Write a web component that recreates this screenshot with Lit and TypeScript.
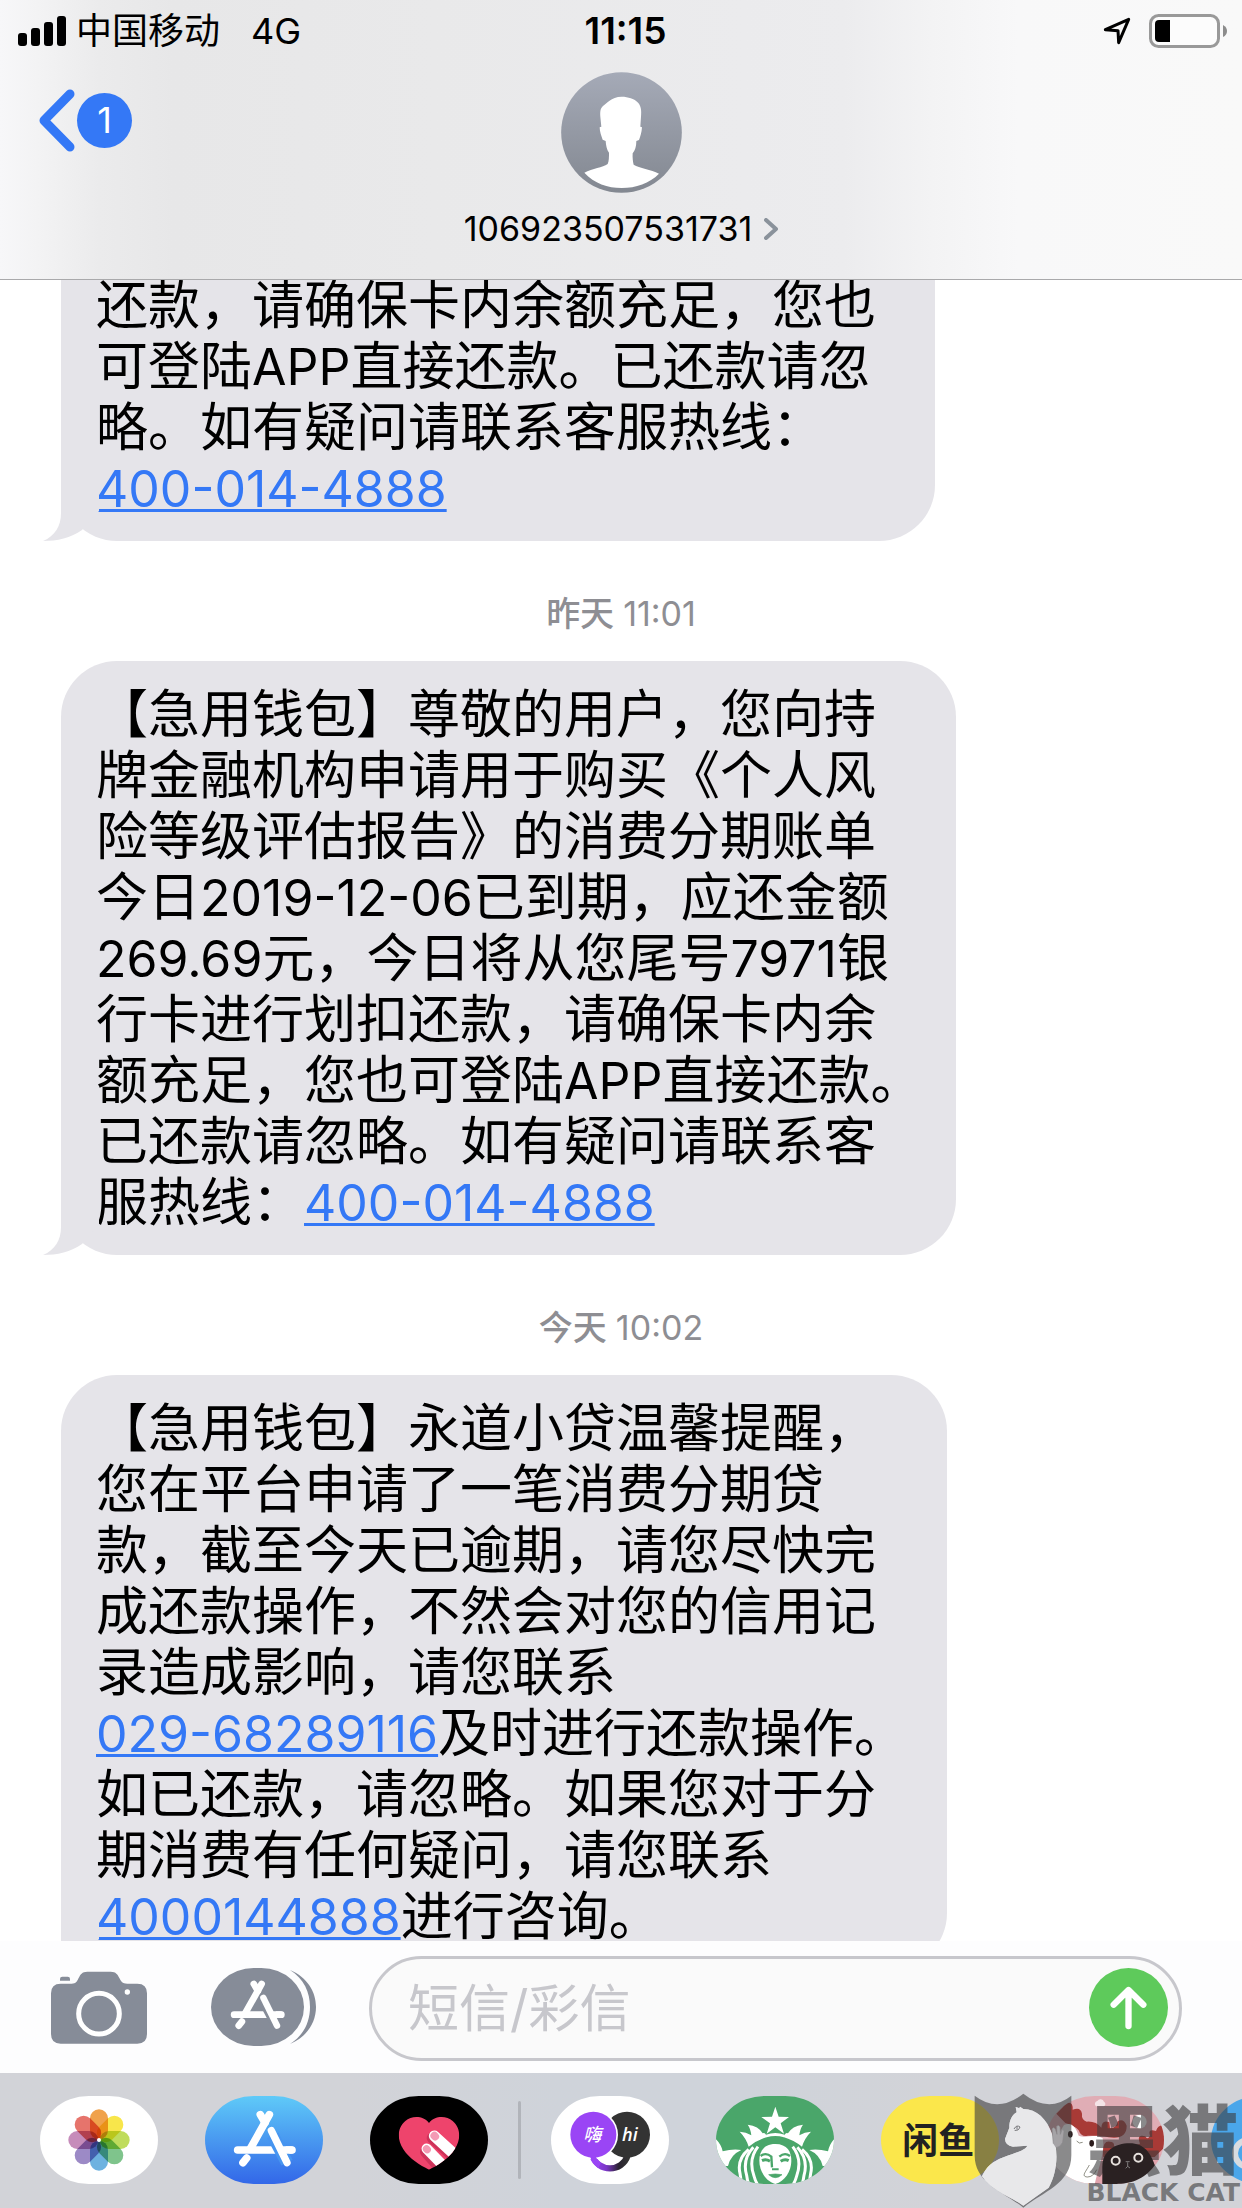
import { LitElement, html, svg, css, nothing, TemplateResult } from "lit";
import { customElement, property } from "lit/decorators.js";

type Part = string | { latin: string } | { link: string };
type Line = Part[];

interface Message {
  time?: string[];
  size: string;
  lines: Line[];
}

const l = (latin: string) => ({ latin });
const tel = (link: string) => ({ link });

const messages: Message[] = [
  {
    size: "narrow cut",
    lines: [
      ["还款，请确保卡内余额充足，您也"],
      ["可登陆", l("APP"), "直接还款。已还款请忽"],
      ["略。如有疑问请联系客服热线："],
      [tel("400-014-4888")],
    ],
  },
  {
    time: ["昨天", "11:01"],
    size: "wide",
    lines: [
      ["【急用钱包】尊敬的用户，您向持"],
      ["牌金融机构申请用于购买《个人风"],
      ["险等级评估报告》的消费分期账单"],
      ["今日", l("2019-12-06"), "已到期，应还金额"],
      [l("269.69"), "元，今日将从您尾号", l("7971"), "银"],
      ["行卡进行划扣还款，请确保卡内余"],
      ["额充足，您也可登陆", l("APP"), "直接还款。"],
      ["已还款请忽略。如有疑问请联系客"],
      ["服热线：", tel("400-014-4888")],
    ],
  },
  {
    time: ["今天", "10:02"],
    size: "medium",
    lines: [
      ["【急用钱包】永道小贷温馨提醒，"],
      ["您在平台申请了一笔消费分期贷"],
      ["款，截至今天已逾期，请您尽快完"],
      ["成还款操作，不然会对您的信用记"],
      ["录造成影响，请您联系"],
      [tel("029-68289116"), "及时进行还款操作。"],
      ["如已还款，请忽略。如果您对于分"],
      ["期消费有任何疑问，请您联系"],
      [tel("4000144888"), "进行咨询。"],
    ],
  },
];

const base = css`
  :host {
    font-family: Inter, "Noto Sans CJK SC", sans-serif;
    text-spacing-trim: space-all;
    text-autospace: no-autospace;
  }
  * {
    box-sizing: border-box;
  }
  svg {
    display: block;
    flex: none;
  }
  button {
    margin: 0;
    padding: 0;
    border: 0;
    background: none;
    color: inherit;
    font: inherit;
  }
`;

/* ---------- header ---------- */

@customElement("chat-header")
export class ChatHeader extends LitElement {
  static styles = [
    base,
    css`
      :host {
        display: block;
        color: #000;
        border-bottom: 1px solid #a9a9ab;
        background: linear-gradient(
          90deg,
          #f7f7f9 0%,
          #f3f3f4 3%,
          #ebebec 8%,
          #e7e7e8 14%,
          #e9e9ea 35%,
          #ebebed 60%,
          #ececee 68%,
          #f3f3f4 75%,
          #f8f8f9 82%,
          #f9f9f9 100%
        );
      }
      .status {
        display: grid;
        grid-template-columns: 1fr auto 1fr;
        align-items: center;
        height: 62px;
        padding: 0 15px 0 18px;
        font-size: 36px;
        line-height: 40px;
      }
      .left {
        display: flex;
        align-items: center;
        gap: 10px;
      }
      .net {
        margin-left: 21px;
      }
      .right {
        display: flex;
        align-items: center;
        justify-content: flex-end;
        gap: 18px;
      }
      .time {
        padding-left: 6px;
        font-size: 37px;
        font-weight: 600;
      }
      .nav {
        display: grid;
        grid-template-columns: 1fr auto 1fr;
        align-items: start;
        padding: 10px 38px 30px;
      }
      .back {
        display: flex;
        align-items: center;
        gap: 2px;
        margin-top: 17px;
      }
      .count {
        width: 55px;
        height: 55px;
        border-radius: 50%;
        background: #3478f6;
        color: #fff;
        font-size: 36px;
        line-height: 55px;
        text-align: center;
      }
      .contact {
        display: flex;
        flex-direction: column;
        align-items: center;
        gap: 16px;
      }
      .number {
        display: flex;
        align-items: center;
        gap: 12px;
        font-size: 34px;
        line-height: 40px;
      }
    `,
  ];

  render() {
    return html`
      <div class="status">
        <div class="left">
          <svg width="48" height="30" viewBox="0 0 48 30" aria-hidden="true">
            <rect x="0" y="17" width="9" height="13" rx="3" />
            <rect x="13" y="12" width="9" height="18" rx="3" />
            <rect x="26" y="6" width="9" height="24" rx="3" />
            <rect x="39" y="0" width="9" height="30" rx="3" />
          </svg>
          <span>中国移动</span><span class="net">4G</span>
        </div>
        <span class="time">11:15</span>
        <div class="right">
          <svg width="28" height="28" viewBox="0 0 84 84" aria-hidden="true">
            <path
              d="M7 38 L77 7 L47 77 L45 41 Z"
              fill="none"
              stroke="#000"
              stroke-width="9"
              stroke-linejoin="round"
            />
          </svg>
          <svg width="78" height="34" viewBox="0 0 78 34" aria-hidden="true">
            <rect x="1.5" y="1.5" width="68" height="31" rx="8" fill="#fcfcfc" stroke="#999" stroke-width="3" />
            <path d="M21 6 V28 H10 Q6 28 6 24 V10 Q6 6 10 6Z" />
            <path d="M74 11 Q78 13 78 17 Q78 21 74 23Z" fill="#8c8c8c" />
          </svg>
        </div>
      </div>
      <nav class="nav">
        <button class="back" aria-label="返回">
          <svg width="37" height="63" viewBox="0 0 37 63">
            <path
              d="M32 5 L6 31.500 L32 58"
              fill="none"
              stroke="#3478f6"
              stroke-width="9"
              stroke-linecap="round"
              stroke-linejoin="round"
            />
          </svg>
          <span class="count">1</span>
        </button>
        <button class="contact">
          <svg width="121" height="121" viewBox="420 216 363 363" aria-hidden="true">
            <defs>
              <linearGradient id="av" x1="0" y1="0" x2="0" y2="1">
                <stop offset="0" stop-color="#a5aab7" />
                <stop offset="1" stop-color="#838891" />
              </linearGradient>
            </defs>
            <circle cx="601.500" cy="397.500" r="181" fill="url(#av)" />
            <path
              fill="#fff"
              d="M602 290 C622 290 640 297 648 305 C660 315 662 330 660 350 L658 380 L663 382 C662 398 658 410 654 420 L646 423 C646 440 642 452 635 460 C634 475 636 486 638 494 C655 504 690 508 714 521 C685 550 645 564 602 564 C560 564 520 550 490 518 C515 506 545 502 560 492 C564 484 564 470 564 458 C557 450 555 435 554 423 L545 419 C541 408 536 395 536 382 L541 380 L538 350 C537 335 538 325 546 318 C556 312 570 290 602 290Z"
            />
          </svg>
          <span class="number">
            106923507531731
            <svg width="14" height="22" viewBox="0 0 14 22">
              <path
                d="M2 2 L12 11 L2 20"
                fill="none"
                stroke="#8a929b"
                stroke-width="4"
                stroke-linecap="round"
                stroke-linejoin="round"
              />
            </svg>
          </span>
        </button>
      </nav>
    `;
  }
}

/* ---------- bubble ---------- */

@customElement("chat-message")
export class ChatMessage extends LitElement {
  @property({ attribute: false }) message!: Message;

  static styles = [
    base,
    css`
      :host {
        display: block;
      }
      .stamp {
        display: flex;
        justify-content: center;
        gap: 9px;
        padding: 53px 0 27px;
        color: #8e8e93;
        font-size: 34px;
        line-height: 40px;
      }
      .day {
        font-weight: 500;
      }
      .bubble {
        position: relative;
        width: fit-content;
        padding: 23px 30px 22px 35px;
        border-radius: 56px;
        background: #e5e4e9;
        color: #000;
        font-size: 52px;
        line-height: 61px;
      }
      .narrow {
        min-width: 874px;
      }
      .medium {
        min-width: 886px;
      }
      .wide {
        min-width: 895px;
      }
      .cut {
        padding-top: 0;
        border-top-left-radius: 0;
        border-top-right-radius: 0;
      }
      .line {
        height: 61px;
        margin: 0;
        white-space: nowrap;
      }
      .latin,
      .tel {
        font-size: 50px;
      }
      .tel {
        color: #3478f6;
        text-decoration: underline;
        text-decoration-thickness: 3px;
        text-underline-offset: 2px;
        text-decoration-skip-ink: none;
      }
      .tail {
        position: absolute;
        left: -18px;
        bottom: 0;
      }
    `,
  ];

  private part(p: Part) {
    if (typeof p === "string") return p;
    if ("latin" in p) return html`<span class="latin">${p.latin}</span>`;
    return html`<a class="tel" href="tel:${p.link}">${p.link}</a>`;
  }

  render() {
    const m = this.message;
    return html`
      ${m.time
        ? html`<div class="stamp"><span class="day">${m.time[0]}</span><span>${m.time[1]}</span></div>`
        : nothing}
      <div class="bubble ${m.size}">
        <svg class="tail" width="60" height="60" viewBox="0 0 60 60" aria-hidden="true">
          <path fill="#e5e4e9" d="M18 0 V32 C18 45 12 55 0 60 C14 60 28 57 39 49 L56 30 V0Z" />
        </svg>
        ${m.lines.map((line) => html`<p class="line">${line.map((p) => this.part(p))}</p>`)}
      </div>
    `;
  }
}

/* ---------- composer ---------- */

/* The three sticks of the App Store letter, cut apart by strokes of the ground behind it. */
const storeSticks = (ground: string) => svg`
  <g fill="none" stroke-linecap="round" stroke-width="23">
    <path d="M98 162 H258" stroke="#fff" />
    <path d="M193 56 L136 158" stroke="#fff" />
    <path d="M166 56 L180 80" stroke="#fff" />
    <path d="M203 118 L246 200" stroke=${ground} stroke-width="38" stroke-linecap="butt" />
    <path d="M236 162 H261" stroke="#fff" />
    <path d="M125 186 L114 200" stroke="#fff" />
    <path d="M199 104 L246 200" stroke="#fff" stroke-width="22" />
  </g>`;

@customElement("chat-composer")
export class ChatComposer extends LitElement {
  static styles = [
    base,
    css`
      :host {
        display: block;
        background: #fdfdfe;
      }
      .bar {
        display: flex;
        align-items: center;
        padding: 15px 60px 12px 51px;
      }
      .store {
        margin: 0 53px 0 64px;
      }
      .tool {
        padding-bottom: 3px;
      }
      .field {
        display: flex;
        align-items: center;
        flex: 1;
        min-width: 0;
        height: 105px;
        padding: 0 11px 0 36px;
        border: 3px solid #c7c7cc;
        border-radius: 53px;
        background: #fafafa;
      }
      .text {
        flex: 1;
        min-width: 0;
        padding: 0;
        border: 0;
        outline: 0;
        background: none;
        font-family: inherit;
        font-size: 51px;
        line-height: 61px;
      }
      .text::placeholder {
        color: #c7c7cc;
        opacity: 1;
      }
    `,
  ];

  render() {
    return html`
      <form class="bar">
        <button class="tool" type="button" aria-label="相机">
          <svg width="96" height="73" viewBox="153 212 288 217">
            <g fill="#868c98">
              <path
                d="M182 249 H215 C242 249 230 213 262 213 H332 C364 213 352 249 382 249 H412 Q441 249 441 278 V400 Q441 429 412 429 H182 Q153 429 153 400 V278 Q153 249 182 249Z"
              />
              <path d="M180 240 V235 Q180 228 187 228 H203 Q210 228 210 235 V240Z" />
            </g>
            <circle cx="297" cy="339" r="61" fill="none" stroke="#fff" stroke-width="15" />
            <circle cx="382" cy="274" r="8" fill="#fff" />
          </svg>
        </button>
        <button class="tool store" type="button" aria-label="应用">
          <svg width="105" height="78" viewBox="633 204 315 234">
            <rect x="633" y="204" width="279" height="234" rx="128" ry="117" fill="#868c98" />
            <path
              fill="#868c98"
              d="M870 210 C922 232 948 275 948 321 C948 367 922 410 870 432 C912 405 930 365 930 321 C930 277 912 237 870 210Z"
            />
            <g transform="translate(617 203) scale(0.870)">${storeSticks("#868c98")}</g>
          </svg>
        </button>
        <div class="field">
          <input class="text" type="text" placeholder="短信/彩信" aria-label="短信/彩信" />
          <button class="tool" type="button" aria-label="发送">
            <svg width="79" height="79" viewBox="0 0 237 237">
              <circle cx="118.500" cy="118.500" r="118.500" fill="#5eca5b" />
              <path
                d="M118.500 174 V72 M74 110 L118.500 66 L163 110"
                fill="none"
                stroke="#fff"
                stroke-width="19"
                stroke-linecap="round"
                stroke-linejoin="round"
              />
            </svg>
          </button>
        </div>
      </form>
    `;
  }
}

/* ---------- app strip ---------- */

const petals = ["#f0a24c", "#f8e64b", "#bfdc5c", "#7fc48c", "#6db2e0", "#9c8ac6", "#c68cba", "#e6746c"];

const pill = (label: string, ground: string, body: TemplateResult | unknown) => html`
  <button class="app" aria-label=${label}>
    <svg width="118" height="88" viewBox="0 0 354 264">
      <defs>
        <clipPath id="pill"><rect width="354" height="264" rx="146" ry="132" /></clipPath>
        <linearGradient id="store" x1="0" y1="0" x2="0" y2="1">
          <stop offset="0" stop-color="#5fcaf8" />
          <stop offset="1" stop-color="#3367e8" />
        </linearGradient>
        <linearGradient id="smile" x1="0" x2="1">
          <stop offset="0" stop-color="#9a45f5" />
          <stop offset="0.400" stop-color="#7a36c6" />
          <stop offset="0.750" stop-color="#2a2430" />
          <stop offset="1" stop-color="#333" />
        </linearGradient>
        <clipPath id="heart"
          ><path
            d="M177 81 C160 58 125 58 106 75 C82 95 80 130 100 160 C118 188 150 208 177 221 C204 208 236 188 254 160 C274 130 272 95 248 75 C229 58 194 58 177 81Z"
        /></clipPath>
      </defs>
      <g clip-path="url(#pill)">
        <rect width="354" height="264" fill=${ground} />
        ${body}
      </g>
    </svg>
  </button>
`;

const photos = svg`
  <g transform="translate(177 132)">
    ${petals.map(
      (c, i) =>
        svg`<rect class="petal" x="-27" y="-92" width="54" height="90" rx="27" fill=${c} transform="rotate(${i * 45})" />`
    )}
    <circle r="6" fill="#fff" />
  </g>`;

const heart = svg`
  <g clip-path="url(#heart)">
    <rect x="70" y="50" width="220" height="190" fill="#ee446c" />
    <g stroke-linecap="round" fill="none">
      <path d="M186 126 L270 200 M166 168 L230 240" stroke="#b8284c" stroke-width="32" opacity=".6" />
      <path d="M193 120 L276 196" stroke="#fff" stroke-width="33" />
      <path d="M170 158 L236 226" stroke="#fff" stroke-width="31" />
    </g>
    <rect x="182" y="107" width="24" height="27" rx="12" fill="#f49ab4" transform="rotate(-45 194 120)" />
    <rect x="160" y="147" width="22" height="25" rx="11" fill="#f49ab4" transform="rotate(-45 171 160)" />
  </g>`;

const greeting = svg`
  <path d="M124 178 C140 230 214 230 230 178" fill="none" stroke="url(#smile)" stroke-width="19" />
  <circle cx="228" cy="116" r="69" fill="#333" />
  <circle cx="127" cy="116" r="74" fill="#fff" />
  <path d="M116 178 C122 198 130 208 142 216 L150 200 C140 194 136 186 132 178Z" fill="#9a45f5" />
  <circle cx="127" cy="116" r="69" fill="#9a45f5" />
  <text class="hai" x="97" y="136">嗨</text>
  <text class="hi" x="213" y="136">hi</text>`;

const siren = svg`
  <g fill="#fff">
    <path d="M178 32 L188 62 L219 63 L194 82 L204 113 L178 94 L152 113 L162 82 L136 63 L168 62Z" />
    <path d="M71 107 Q90 108 106 118 Q104 98 95 86 Q128 90 140 112 Q146 108 150 116 L156 122 Q122 132 98 152 Q90 126 71 107Z" />
    <path d="M285 107 Q266 108 250 118 Q252 98 261 86 Q228 90 216 112 Q210 108 206 116 L200 122 Q234 132 258 152 Q266 126 285 107Z" />
    <path d="M150 116 Q178 106 206 116 L204 124 Q178 116 152 124Z" />
    <path d="M0 130 Q16 146 20 166 Q50 158 76 162 Q44 176 36 210 H0Z" />
    <path d="M354 130 Q340 146 336 166 Q306 158 280 162 Q312 176 320 210 H354Z" />
    <path d="M178 144 C142 144 130 168 130 194 C130 226 150 256 178 264 C206 256 226 226 226 194 C226 168 214 144 178 144Z" />
  </g>
  <g fill="none" stroke="#fff" stroke-width="9">
    <path d="M98 160 Q62 190 72 232 Q74 252 80 268" />
    <path d="M112 154 Q78 190 92 238 Q94 256 100 268" />
    <path d="M126 152 Q96 190 114 240 Q118 256 126 268" />
    <path d="M258 160 Q294 190 284 232 Q282 252 276 268" />
    <path d="M244 154 Q278 190 264 238 Q262 256 256 268" />
    <path d="M230 152 Q260 190 242 240 Q238 256 230 268" />
  </g>
  <g fill="none" stroke="#4aa66a" stroke-width="7">
    <path d="M134 180 Q150 168 166 182 L168 214 M222 180 Q206 168 190 182" />
    <path d="M138 194 Q150 188 162 196 M218 194 Q206 188 194 196" stroke-width="9" />
    <path d="M168 220 H188" stroke-width="6" />
    <path d="M158 236 Q178 232 198 236 Q178 254 158 236Z" fill="#4aa66a" stroke-width="2" />
  </g>`;

const pets = svg`
  <g transform="translate(-614 -587)">
    <path fill="#df9da6" d="M614 760 H970 V860 H614Z" opacity=".6" />
    <path fill="#f4e4e7" d="M764 618 a9 9 0 0 1 4 -16 a11 11 0 0 1 20 2 a8 8 0 0 1 0 14Z" />
    <path fill="#a83a36" d="M645 640 Q664 622 676 608 Q696 602 694 628 Q718 618 722 640 Q720 658 736 664 Q764 662 780 682 Q782 656 804 666 L806 684 Q828 682 828 664 Q846 652 856 676 Q856 712 818 712 Q784 708 770 706 L740 706 Q720 712 712 690 Q700 676 672 668Z" />
    <path fill="#a83a36" d="M786 770 Q780 720 806 724 Q820 724 818 738 L850 744 L896 730 Q884 700 912 708 Q918 720 926 706 Q918 684 944 692 Q950 674 966 676 L970 740 L940 770Z" />
    <path fill="#fff" d="M614 775 C640 735 650 700 668 674 C690 664 704 680 712 706 C740 716 760 698 784 714 C792 760 768 810 758 862 H690 C650 850 620 820 614 775Z" />
    <circle cx="895" cy="664" r="21" fill="#fff" />
    <ellipse cx="687" cy="702" rx="7" ry="10" fill="#2b1b1b" />
    <ellipse cx="751" cy="729" rx="7" ry="10" fill="#2b1b1b" />
    <path d="M706 722 q7 10 18 4 M744 794 c-10 20 -26 34 -6 36 q18 0 28 -22" fill="none" stroke="#554" stroke-width="2" />
  </g>`;

/* The black cat sits in front of the lettering, so it is drawn in its own layer. */
const blackCat = svg`
  <path fill="#2a2122" d="M790 851 V800 C790 752 828 729 872 729 C916 729 936 760 947 795 C915 840 870 851 832 851Z" />
  <g fill="none" stroke="#e6e0dc" stroke-width="6"><circle cx="830" cy="781" r="12" /><circle cx="898" cy="772" r="12" /></g>
  <path d="M860 784 h12 M866 786 v12 l-6 6 M866 798 l7 5" fill="none" stroke="#aaa" stroke-width="2" />`;

@customElement("app-strip")
export class AppStrip extends LitElement {
  static styles = [
    base,
    css`
      :host {
        display: block;
        position: relative;
        overflow: hidden;
        background: linear-gradient(90deg, #d2d3d8 0%, #d2d3d8 28%, #cfd3da 45%, #cfd3da 60%, #d2d3d8 75%);
      }
      .strip {
        display: flex;
        align-items: center;
        gap: 30px;
        padding: 23px 0 24px 40px;
      }
      .group {
        display: flex;
        flex: none;
        gap: 47px;
      }
      .rule {
        flex: none;
        width: 3px;
        height: 78px;
        border-radius: 2px;
        background: #b1b4ba;
      }
      .petal {
        mix-blend-mode: multiply;
      }
      .hai,
      .hi {
        fill: #fff;
        font-style: italic;
        font-size: 54px;
        font-weight: 500;
      }
      .hi {
        font-family: "Open Sans", sans-serif;
        font-weight: 600;
      }
      .fish {
        fill: #222;
        font-size: 108px;
        font-weight: 700;
      }
      .mark {
        position: absolute;
        right: 0;
        bottom: 0;
        display: flex;
        align-items: flex-end;
        gap: 14px;
        padding-right: 2px;
        color: rgba(60, 60, 62, 0.6);
        white-space: nowrap;
        pointer-events: none;
      }
      .name {
        position: relative;
        display: flex;
        flex-direction: column;
        padding-bottom: 3px;
      }
      .cn {
        font-size: 76px;
        line-height: 80px;
        font-weight: 900;
      }
      .en {
        font-family: "DejaVu Sans", sans-serif;
        font-size: 25px;
        line-height: 24px;
        font-weight: 700;
      }
      .cat {
        position: absolute;
        left: 16px;
        bottom: 24px;
      }
    `,
  ];

  render() {
    return html`
      <div class="strip">
        <div class="group">
          ${pill("照片", "#fff", photos)}
          ${pill("App Store", "url(#store)", storeSticks("#4795f0"))}
          ${pill("Digital Touch", "#000", heart)}
        </div>
        <span class="rule"></span>
        <div class="group">
          ${pill("嗨 hi", "#fff", greeting)}
          ${pill("星巴克", "#4aa66a", siren)}
          ${pill("闲鱼", "#fbe74b", svg`<text class="fish" x="64" y="174">闲鱼</text>`)}
          ${pill("贴纸", "#e0adb5", pets)}
          ${pill(
            "更多",
            "#4aa6ea",
            svg`<circle cx="112" cy="172" r="40" fill="none" stroke="#d8dce0" stroke-width="18" />`
          )}
        </div>
      </div>
      <div class="mark">
        <svg width="98" height="115" viewBox="38 38 294 345" aria-hidden="true">
          <path
            fill="currentColor"
            fill-rule="evenodd"
            d="M40 46 Q110 100 186 40 Q262 100 330 46 V225 C330 310 245 335 186 382 C127 335 40 310 40 225Z M163 80 L166 96 C150 106 144 122 144 142 L131 176 Q132 196 155 199 L198 196 C190 216 130 222 96 246 C76 260 68 275 62 288 C90 330 140 345 186 376 Q225 348 262 322 C292 270 290 200 272 160 C256 116 226 86 186 86 L176 79 L174 84Z"
          />
          <path
            fill="#e8e8ea"
            d="M163 80 L166 96 C150 106 144 122 144 142 L131 176 Q132 196 155 199 L198 196 C190 216 130 222 96 246 C76 260 68 275 62 288 C90 330 140 345 186 376 Q225 348 262 322 C292 270 290 200 272 160 C256 116 226 86 186 86 L176 79 L174 84Z"
          />
          <path d="M158 146 Q166 132 176 140 Q172 152 160 150 M167 138 V148" fill="none" stroke="#77777a" stroke-width="3" />
          <path
            d="M276 190 L272 146 Q276 138 282 146 L287 162 L286 138 Q292 132 296 140 L297 162 L302 148 Q308 146 308 154 L304 186 Q296 202 284 202"
            fill="#a5a3a6"
            stroke="#8a888b"
            stroke-width="2"
          />
        </svg>
        <div class="name">
          <span class="cn">黑猫</span><span class="en">BLACK CAT</span>
          <svg class="cat" width="53" height="41" viewBox="789 728 159 123" aria-hidden="true">${blackCat}</svg>
        </div>
      </div>
    `;
  }
}

/* ---------- page ---------- */

@customElement("app-root")
export class AppRoot extends LitElement {
  static styles = [
    base,
    css`
      :host {
        display: flex;
        flex-direction: column;
        height: 100vh;
        background: #fff;
      }
      .thread {
        flex: 1;
        min-height: 0;
        overflow: hidden;
      }
      .list {
        margin-top: -5px;
        padding-left: 61px;
        padding-right: 61px;
      }
    `,
  ];

  render() {
    return html`
      <chat-header></chat-header>
      <main class="thread">
        <div class="list">${messages.map((m) => html`<chat-message .message=${m}></chat-message>`)}</div>
      </main>
      <chat-composer></chat-composer>
      <app-strip></app-strip>
    `;
  }
}
